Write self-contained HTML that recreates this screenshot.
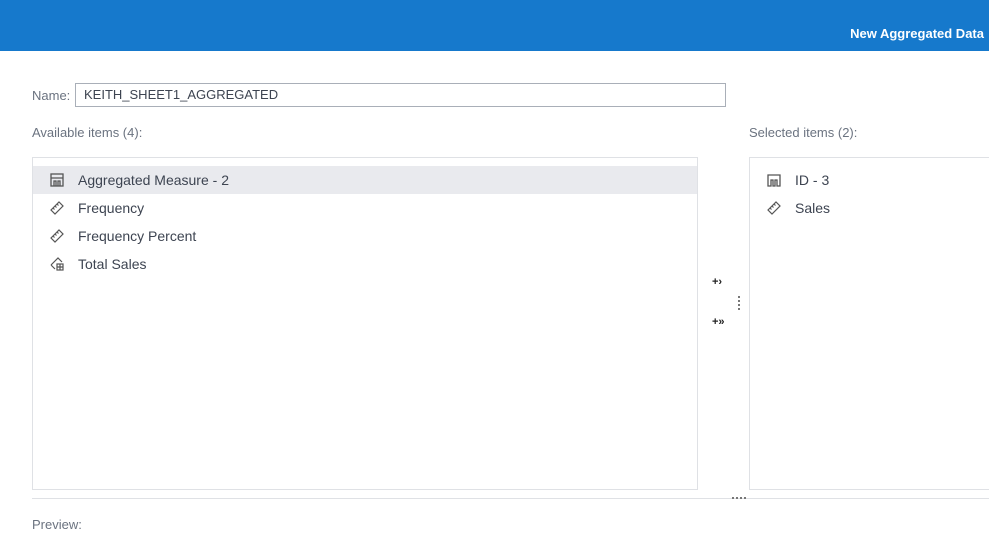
<!DOCTYPE html>
<html><head><style>
body{margin:0;width:989px;height:533px;overflow:hidden;background:#fff;font-family:"Liberation Sans",sans-serif;position:relative;color:#3d4451}
.hdr{position:absolute;left:0;top:0;width:989px;height:51px;background:#1679cc}
.hdr span{position:absolute;right:5px;top:26px;color:#fff;font-weight:bold;font-size:13px}
.lbl{position:absolute;font-size:13px;color:#6b7380}
.box{position:absolute;border:1px solid #dfe1e5;background:#fff}
.item{position:absolute;left:0;width:100%;height:28px;font-size:14px;color:#3d4451;line-height:28px;white-space:nowrap}
.item span{position:absolute;left:45px}
.item svg{position:absolute;left:17px;top:7px}
</style></head><body>
<div class="hdr"><span>New Aggregated Data</span></div>
<div class="lbl" style="left:32px;top:88px">Name:</div>
<div style="position:absolute;left:75px;top:83px;font-size:13px;line-height:22px;color:#3d4451;padding-left:8px;box-sizing:border-box;width:651px;height:24px;border:1px solid #a9afb8">KEITH_SHEET1_AGGREGATED</div>
<div class="lbl" style="left:32px;top:125px">Available items (4):</div>
<div class="lbl" style="left:749px;top:125px">Selected items (2):</div>
<div class="box" style="left:32px;top:157px;width:664px;height:331px">
<div class="item" style="top:8px;background:#e9eaee"><svg width="14" height="14" viewBox="0 0 14 14" fill="none" stroke="#555" stroke-width="1.3"><rect x="1" y="1" width="12" height="12"/><path d="M1 5h12M4 13V8h2v5M8 13V8h2v5"/></svg><span>Aggregated Measure - 2</span></div>
<div class="item" style="top:36px"><svg width="14" height="14" viewBox="0 0 14 14" fill="none" stroke="#555" stroke-width="1.2"><path d="M1 9l8-8 4 4-8 8z M5 5l1.5 1.5M7 3l1.5 1.5M3 7l1.5 1.5"/></svg><span>Frequency</span></div>
<div class="item" style="top:64px"><svg width="14" height="14" viewBox="0 0 14 14" fill="none" stroke="#555" stroke-width="1.2"><path d="M1 9l8-8 4 4-8 8z M5 5l1.5 1.5M7 3l1.5 1.5M3 7l1.5 1.5"/></svg><span>Frequency Percent</span></div>
<div class="item" style="top:92px"><svg width="14" height="14" viewBox="0 0 14 14" fill="none" stroke="#555" stroke-width="1.2"><path d="M1 8l7-7 4 4M5 12L1 8"/><rect x="7" y="7" width="6" height="6"/><path d="M7 10h6M10 7v6"/></svg><span>Total Sales</span></div>
</div>
<div style="position:absolute;left:712px;top:276px;font-size:11px;font-weight:bold;color:#222">+›</div>
<div style="position:absolute;left:712px;top:316px;font-size:11px;font-weight:bold;color:#222">+»</div>
<div style="position:absolute;left:738px;top:296px;width:2px;height:14px;background:repeating-linear-gradient(#777 0 2px,transparent 2px 4px)"></div>
<div class="box" style="left:749px;top:157px;width:250px;height:331px">
<div class="item" style="top:8px"><svg width="14" height="14" viewBox="0 0 14 14" fill="none" stroke="#555" stroke-width="1.3"><path d="M1 13V2h12v11h-3V7H8v6H6V7H4v6z"/></svg><span>ID - 3</span></div>
<div class="item" style="top:36px"><svg width="14" height="14" viewBox="0 0 14 14" fill="none" stroke="#555" stroke-width="1.2"><path d="M1 9l8-8 4 4-8 8z M5 5l1.5 1.5M7 3l1.5 1.5M3 7l1.5 1.5"/></svg><span>Sales</span></div>
</div>
<div style="position:absolute;left:32px;top:498px;width:957px;height:1px;background:#dfe1e5"></div>
<div style="position:absolute;left:732px;top:497px;width:14px;height:2px;background:repeating-linear-gradient(90deg,#777 0 2px,transparent 2px 4px)"></div>
<div class="lbl" style="left:32px;top:517px">Preview:</div>
</body></html>
